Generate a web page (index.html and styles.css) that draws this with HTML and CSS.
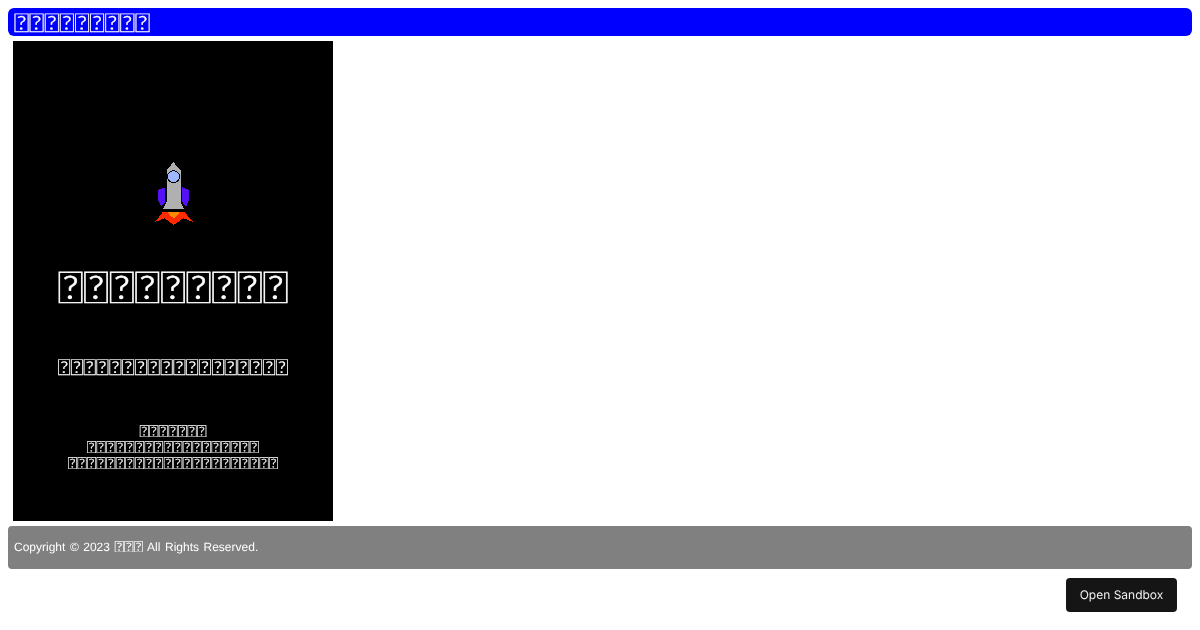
FILE: index.html
```html
<!DOCTYPE html>
<html lang="en">

<head>
  <meta charset="UTF-8" />
  <meta name="viewport" content="width=device-width, initial-scale=1.0" />
  <title>Landing page</title>
  <link rel="stylesheet" href="styles.css">
</head>

<body>
  <div class="page">
    <header class="top-bar"><span class="tofu">&#xE000;&#xE000;&#xE000;&#xE000;&#xE000;&#xE000;&#xE000;&#xE000;&#xE000;</span></header>

    <main class="content">
      <section class="hero">
        <!-- Rocket logo -->
        <svg class="rocket" width="40" height="66" viewBox="0 0 40 66">
          <polygon points="2.3,60.7 10,50.7 31,50.7 40,60.7 30,57.3 20.7,64 11.7,57.3" fill="#ff2a00" />
          <polygon points="15,50.7 26.7,50.7 25,54 20.7,57.3 16.7,54" fill="#ff8c00" />
          <polygon points="5,29 12.3,26.3 12.3,40.7 8.3,45.7 5,39" fill="#5510f5" />
          <polygon points="36,29 29,26.3 29,40.7 33,45.7 36,39" fill="#5510f5" />
          <polygon points="20.5,1.3 27.5,9 27.5,40.7 31,48.3 10,48.3 13.5,40.7 13.5,9" fill="#b0b0b0" />
          <circle cx="20.5" cy="15.7" r="6" fill="#9db6ff" stroke="#000" stroke-width="1" />
        </svg>
        <h1 class="hero-title tofu">&#xE000;&#xE000;&#xE000;&#xE000;&#xE000;&#xE000;&#xE000;&#xE000;&#xE000;</h1>
        <p class="hero-sub tofu">&#xE000;&#xE000;&#xE000;&#xE000;&#xE000;&#xE000;&#xE000;&#xE000;&#xE000;&#xE000;&#xE000;&#xE000;&#xE000;&#xE000;&#xE000;&#xE000;&#xE000;&#xE000;</p>
        <p class="hero-note tofu">&#xE000;&#xE000;&#xE000;&#xE000;&#xE000;&#xE000;&#xE000;<br>&#xE000;&#xE000;&#xE000;&#xE000;&#xE000;&#xE000;&#xE000;&#xE000;&#xE000;&#xE000;&#xE000;&#xE000;&#xE000;&#xE000;&#xE000;&#xE000;&#xE000;&#xE000;<br>&#xE000;&#xE000;&#xE000;&#xE000;&#xE000;&#xE000;&#xE000;&#xE000;&#xE000;&#xE000;&#xE000;&#xE000;&#xE000;&#xE000;&#xE000;&#xE000;&#xE000;&#xE000;&#xE000;&#xE000;&#xE000;&#xE000;</p>
      </section>
    </main>

    <footer class="bottom-bar">Copyright © 2023 <span class="tofu owner">&#xE000;&#xE000;&#xE000;</span> All Rights Reserved.</footer>
  </div>

  <a class="sandbox-btn" href="#">Open Sandbox</a>
</body>

</html>
```

FILE: styles.css
```css
body {
  margin: 8px;
  font-family: "Liberation Sans", Arial, sans-serif;
  text-rendering: geometricPrecision;
  background: #fff;
  color: #fff;
}

/* Own layer, so the text gets plain grey antialiasing */
.page {
  will-change: transform;
}

/* Lato draws missing glyphs as a box with a question mark */
.tofu {
  display: inline-block;
  font-family: Lato, sans-serif;
  font-weight: 300;
  -webkit-text-stroke: 0.012em #fff;
  transform: scaleY(0.88);
}

.top-bar {
  height: 28px;
  line-height: 29px;
  padding: 0 6px;
  font-size: 29.5px;
  background: #00f;
  border-radius: 6px;
}

.content {
  padding: 5px;
}

/* Black card with the centred rocket and copy */
.hero {
  width: 320px;
  height: 480px;
  background: #000;
  display: flex;
  flex-direction: column;
  align-items: center;
  text-align: center;
}

.rocket {
  display: block;
  margin-top: 120px;
  shape-rendering: crispEdges;
}

.hero-title {
  margin: 40px 0 0;
  font-size: 50px;
  line-height: 39px;
}

.hero-sub {
  margin: 51px 0 0;
  font-size: 25px;
  line-height: 20px;
}

.hero-note {
  margin: 43px 0 0;
  font-size: 18.7px;
  line-height: 18.2px;
}

.bottom-bar {
  height: 43px;
  line-height: 43px;
  padding: 0 6px;
  font-size: 12px;
  word-spacing: 1.2px;
  background: #808080;
  border-radius: 4px;
}

.owner {
  font-size: 18.7px;
  line-height: 0;
  transform: translateY(2.5px) scaleY(0.8);
}

/* Floating button, bottom right of the window */
.sandbox-btn {
  position: fixed;
  right: 23px;
  bottom: 18px;
  width: 111px;
  height: 34px;
  line-height: 34px;
  text-align: center;
  font-family: Inter, sans-serif;
  font-size: 12px;
  color: #f0f0f0;
  background: #151515;
  border-radius: 4px;
  text-decoration: none;
  will-change: transform;
}
```
